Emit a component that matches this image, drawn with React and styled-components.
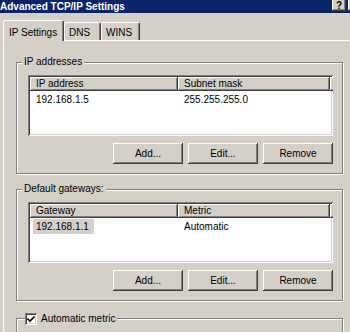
import React from 'react';
import styled, { createGlobalStyle } from 'styled-components';

const COLORS = {
  face: '#d4d0c8',
  shadow: '#808080',
  darkShadow: '#404040',
  highlight: '#ffffff',
  title: '#0a246a',
};

const raised = `
  box-shadow:
    inset -1px -1px 0 ${COLORS.darkShadow},
    inset 1px 1px 0 ${COLORS.highlight},
    inset -2px -2px 0 ${COLORS.shadow};
`;

const sunken = `
  box-shadow:
    inset 1px 1px 0 ${COLORS.shadow},
    inset -1px -1px 0 ${COLORS.highlight},
    inset 2px 2px 0 ${COLORS.darkShadow},
    inset -2px -2px 0 ${COLORS.face};
`;

const GlobalStyle = createGlobalStyle`
  html, body {
    margin: 0;
    padding: 0;
    background: ${COLORS.face};
    overflow: hidden;
  }

  body {
    font-family: "Liberation Sans", Arial, sans-serif;
    font-size: 10px;
    color: #000;
  }
`;

const ipColumns = [
  { title: 'IP address', width: 148 },
  { title: 'Subnet mask', width: 152 },
];

const gatewayColumns = [
  { title: 'Gateway', width: 148 },
  { title: 'Metric', width: 152 },
];

function ListView({ columns, rows }) {
  return (
    <List>
      <HeaderRow>
        {columns.map((col) => (
          <HeaderCell key={col.title} $width={col.width}>
            {col.title}
          </HeaderCell>
        ))}
        <HeaderFiller />
      </HeaderRow>
      {rows.map((row) => (
        <Row key={row.cells[0]}>
          {row.cells.map((text, i) => (
            <Cell key={i} $width={columns[i].width}>
              <CellText $selected={row.selected && i === 0}>{text}</CellText>
            </Cell>
          ))}
        </Row>
      ))}
    </List>
  );
}

function ButtonRow() {
  return (
    <Buttons>
      <Button>Add...</Button>
      <Button>Edit...</Button>
      <Button>Remove</Button>
    </Buttons>
  );
}

function CheckMark() {
  return (
    <svg width="8" height="8" viewBox="0 0 8 8">
      <path d="M0.5 3.5 L3 6 L7.5 1.5" fill="none" stroke="#000" strokeWidth="1.6" />
    </svg>
  );
}

export default function App() {
  return (
    <>
      <GlobalStyle />
      <Window>
        <TitleBar>
          <Title>Advanced TCP/IP Settings</Title>
          <TitleButtons>
            <TitleButton>?</TitleButton>
            <TitleButton aria-label="Close" />
          </TitleButtons>
        </TitleBar>

        <Body>
          <TabStrip>
            <Tab $active $width={61}>IP Settings</Tab>
            <Tab $width={37}>DNS</Tab>
            <Tab $width={39}>WINS</Tab>
          </TabStrip>

          <Panel>
            <GroupBox>
              <Legend>IP addresses</Legend>
              <ListView
                columns={ipColumns}
                rows={[{ cells: ['192.168.1.5', '255.255.255.0'] }]}
              />
              <ButtonRow />
            </GroupBox>

            <GroupBox>
              <Legend>Default gateways:</Legend>
              <ListView
                columns={gatewayColumns}
                rows={[{ cells: ['192.168.1.1', 'Automatic'], selected: true }]}
              />
              <ButtonRow />
            </GroupBox>

            <GroupBox $offset={2}>
              <CheckLegend>
                <CheckBox>
                  <CheckMark />
                </CheckBox>
                Automatic metric
              </CheckLegend>
              <MetricRow>
                <MetricSpacer />
                <TextInput />
              </MetricRow>
            </GroupBox>
          </Panel>
        </Body>
      </Window>
    </>
  );
}

const Window = styled.div`
  width: 364px;
  height: 332px;
  overflow: hidden;
  background: ${COLORS.face};
`;

const TitleBar = styled.div`
  height: 13px;
  display: flex;
  justify-content: space-between;
  align-items: flex-start;
  padding-right: 2px;
  background: ${COLORS.title};
`;

const Title = styled.div`
  color: #fff;
  font-weight: bold;
  font-size: 10px;
  line-height: 13px;
  white-space: nowrap;
`;

const TitleButtons = styled.div`
  display: flex;
  gap: 2px;
  margin-top: -3px;
`;

const TitleButton = styled.div`
  width: 14px;
  height: 14px;
  box-sizing: border-box;
  padding-top: 4px;
  background: ${COLORS.face};
  ${raised}
  font-weight: bold;
  font-size: 10px;
  line-height: 9px;
  text-align: center;
`;

const Body = styled.div`
  padding-top: 7px;
`;

const TabStrip = styled.div`
  display: flex;
  align-items: flex-end;
  height: 20px;
  margin-left: 3px;
`;

const Tab = styled.div`
  position: relative;
  width: ${(p) => p.$width}px;
  box-sizing: border-box;
  height: ${(p) => (p.$active ? 21 : 18)}px;
  margin-bottom: ${(p) => (p.$active ? -1 : 0)}px;
  z-index: ${(p) => (p.$active ? 1 : 0)};
  padding: ${(p) => (p.$active ? '6px 0 0 5px' : '4px 0 0 4px')};
  line-height: 12px;
  white-space: nowrap;
  background: ${COLORS.face};
  border-left: 1px solid ${COLORS.highlight};
  border-top: 1px solid ${COLORS.highlight};
  border-right: 1px solid ${COLORS.darkShadow};
  border-radius: 2px 2px 0 0;
  box-shadow: inset -1px 0 0 ${COLORS.shadow};
`;

const Panel = styled.div`
  margin-left: 3px;
  border-top: 1px solid ${COLORS.highlight};
  border-left: 1px solid ${COLORS.highlight};
  padding: 15px 0 0 12px;
  display: flex;
  flex-direction: column;
  gap: 9px;
`;

const GroupBox = styled.fieldset`
  width: 327px;
  box-sizing: border-box;
  margin: ${(p) => p.$offset || 0}px 0 0;
  min-inline-size: 0;
  padding: 7px 8px 9px 11px;
  border: 1px solid ${COLORS.shadow};
  box-shadow:
    inset 1px 1px 0 ${COLORS.highlight},
    1px 1px 0 ${COLORS.highlight};
`;

const Legend = styled.legend`
  margin-left: -6px;
  padding: 0 2px;
  line-height: 12px;
  background: ${COLORS.face};
`;

const CheckLegend = styled.legend`
  display: flex;
  align-items: center;
  gap: 4px;
  margin-left: -3px;
  padding: 0 2px 0 0;
  line-height: 13px;
  background: ${COLORS.face};
`;

const CheckBox = styled.span`
  width: 12px;
  height: 12px;
  box-sizing: border-box;
  display: flex;
  align-items: center;
  justify-content: center;
  background: #fff;
  ${sunken}
`;

const List = styled.div`
  width: 305px;
  height: 61px;
  box-sizing: border-box;
  padding: 2px;
  background: #fff;
  ${sunken}
  overflow: hidden;
`;

const HeaderRow = styled.div`
  display: flex;
  height: 14px;
`;

const HeaderCell = styled.div`
  width: ${(p) => p.$width}px;
  flex-shrink: 0;
  box-sizing: border-box;
  padding-left: 6px;
  line-height: 14px;
  white-space: nowrap;
  background: ${COLORS.face};
  ${raised}
`;

const HeaderFiller = styled(HeaderCell)`
  flex: 1;
`;

const Row = styled.div`
  display: flex;
  height: 15px;
  margin-top: 1px;
`;

const Cell = styled.div`
  width: ${(p) => p.$width}px;
  flex-shrink: 0;
  box-sizing: border-box;
  padding-left: 3px;
  line-height: 15px;
  white-space: nowrap;
`;

const CellText = styled.span`
  display: inline-block;
  padding: 0 5px 0 3px;
  background: ${(p) => (p.$selected ? COLORS.face : 'transparent')};
`;

const Buttons = styled.div`
  display: flex;
  justify-content: flex-end;
  gap: 5px;
  margin-top: 7px;
  padding-right: 1px;
`;

const Button = styled.button`
  width: 70px;
  height: 21px;
  padding: 0;
  border: none;
  background: ${COLORS.face};
  ${raised}
  font-family: inherit;
  font-size: 10px;
  color: #000;
`;

const MetricRow = styled.div`
  display: flex;
  align-items: center;
  margin-top: 4px;
`;

const MetricSpacer = styled.span`
  width: 88px;
`;

const TextInput = styled.div`
  width: 69px;
  height: 20px;
  background: #fff;
  ${sunken}
`;
